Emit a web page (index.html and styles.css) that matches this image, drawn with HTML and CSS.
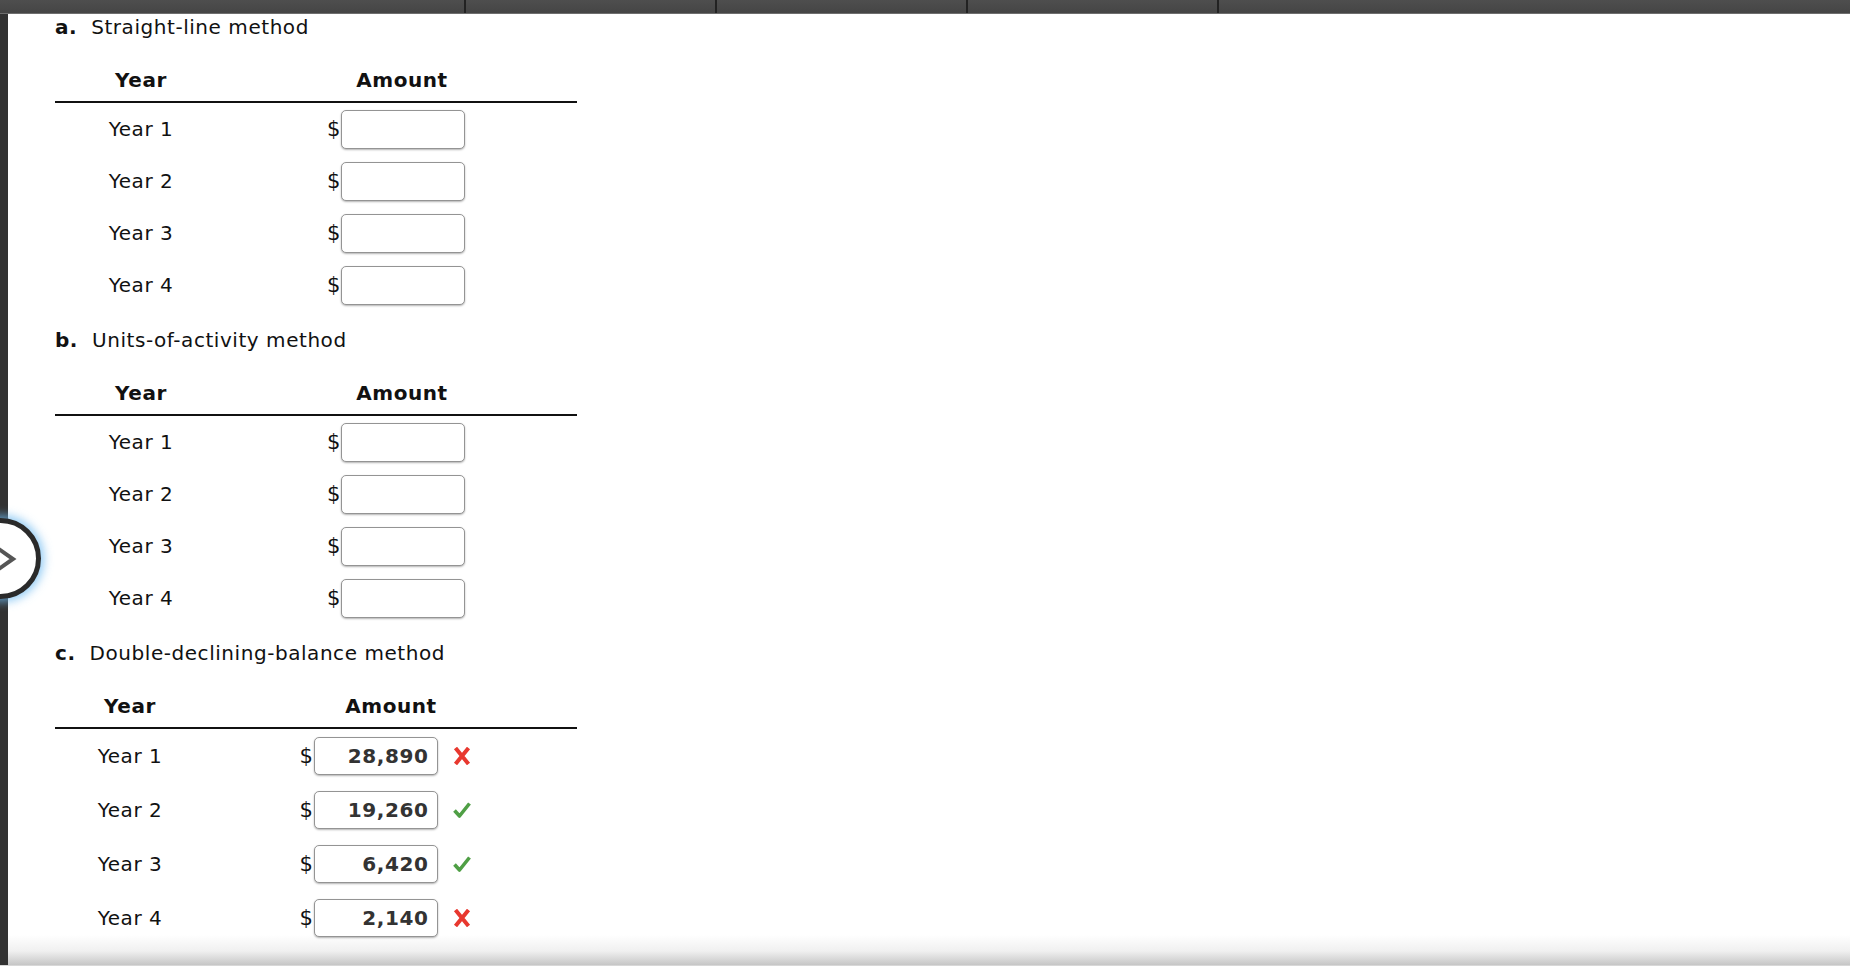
FILE: index.html
```html
<!DOCTYPE html>
<html>
<head>
<meta charset="utf-8">
<title>Depreciation</title>
<link rel="stylesheet" href="styles.css">
</head>
<body>
<div class="topbar">
  <div class="seg seg-first"></div>
  <div class="seg"></div>
  <div class="seg"></div>
  <div class="seg"></div>
  <div class="seg seg-last"></div>
</div>
<div class="frame">
  <div class="strip"></div>
  <div class="content">
    <section class="part">
      <h2 class="heading"><b class="letter">a.</b>Straight-line method</h2>
      <div class="grid ab">
        <div class="th">Year</div><div class="th">Amount</div>
        <div class="yr">Year 1</div><div class="amt"><span class="cur">$</span><input class="box" type="text"></div>
        <div class="yr">Year 2</div><div class="amt"><span class="cur">$</span><input class="box" type="text"></div>
        <div class="yr">Year 3</div><div class="amt"><span class="cur">$</span><input class="box" type="text"></div>
        <div class="yr">Year 4</div><div class="amt"><span class="cur">$</span><input class="box" type="text"></div>
      </div>
    </section>
    <section class="part">
      <h2 class="heading"><b class="letter">b.</b>Units-of-activity method</h2>
      <div class="grid ab">
        <div class="th">Year</div><div class="th">Amount</div>
        <div class="yr">Year 1</div><div class="amt"><span class="cur">$</span><input class="box" type="text"></div>
        <div class="yr">Year 2</div><div class="amt"><span class="cur">$</span><input class="box" type="text"></div>
        <div class="yr">Year 3</div><div class="amt"><span class="cur">$</span><input class="box" type="text"></div>
        <div class="yr">Year 4</div><div class="amt"><span class="cur">$</span><input class="box" type="text"></div>
      </div>
    </section>
    <section class="part">
      <h2 class="heading"><b class="letter">c.</b>Double-declining-balance method</h2>
      <div class="grid cc">
        <div class="th">Year</div><div class="th">Amount</div>
        <div class="yr">Year 1</div><div class="amt"><span class="cur">$</span><input class="box filled" type="text" value="28,890" readonly><svg class="mark" viewBox="0 0 18 18"><path d="M2.5 1 L15.5 17 M15.5 1 L2.5 17" stroke="#e8382f" stroke-width="4" fill="none"/></svg></div>
        <div class="yr">Year 2</div><div class="amt"><span class="cur">$</span><input class="box filled" type="text" value="19,260" readonly><svg class="mark" viewBox="0 0 18 18"><path d="M1.5 9.5 L6.5 15 L16.5 2.5" stroke="#4f9f45" stroke-width="3.6" fill="none" stroke-linejoin="round"/></svg></div>
        <div class="yr">Year 3</div><div class="amt"><span class="cur">$</span><input class="box filled" type="text" value="6,420" readonly><svg class="mark" viewBox="0 0 18 18"><path d="M1.5 9.5 L6.5 15 L16.5 2.5" stroke="#4f9f45" stroke-width="3.6" fill="none" stroke-linejoin="round"/></svg></div>
        <div class="yr">Year 4</div><div class="amt"><span class="cur">$</span><input class="box filled" type="text" value="2,140" readonly><svg class="mark" viewBox="0 0 18 18"><path d="M2.5 1 L15.5 17 M15.5 1 L2.5 17" stroke="#e8382f" stroke-width="4" fill="none"/></svg></div>
      </div>
    </section>
  </div>
</div>
<div class="bottom"></div>
<button class="navbtn" aria-label="Next"><svg viewBox="0 0 20 34" class="chev"><path d="M-6 3 L14 17 L-6 31" stroke="#555" stroke-width="4" fill="none"/></svg></button>
</body>
</html>
```
FILE: styles.css
```css
html, body {
  margin: 0;
  padding: 0;
  background: #fff;
  overflow: hidden;
}
body {
  font-family: "DejaVu Sans", Verdana, sans-serif;
  color: #111;
  width: 1850px;
  height: 972px;
  position: relative;
  letter-spacing: 0.55px;
}
.topbar {
  height: 13px;
  display: flex;
  background: linear-gradient(#4e4e4e, #454545);
  border-bottom: 1px solid #6e6e6e;
}
.seg {
  width: 249px;
  border-right: 2px solid #222;
}
.seg-first { width: 464px; }
.seg-last { flex: 1; border-right: none; }
.frame {
  display: flex;
  height: 951px;
}
.strip {
  width: 8px;
  background: #323232;
}
.content {
  flex: 1;
  padding-left: 47px;
  background: linear-gradient(to bottom, #fff calc(100% - 30px), #f0f0f0 calc(100% - 14px), #c6c6c6 100%);
}
.bottom {
  height: 7px;
  border-top: 1px solid #d8d8d8;
  background: #fff;
}
.part {
  width: 522px;
}
.part + .part .heading { margin-top: 16px; }
.heading {
  margin: 0;
  padding-top: 1px;
  font-size: 20px;
  font-weight: normal;
  line-height: 24px;
}
.letter {
  font-weight: bold;
  margin-right: 14px;
}
.grid {
  display: grid;
  margin-top: 20px;
  grid-template-rows: 44px;
  grid-auto-rows: 52px;
}
.ab { grid-template-columns: 172px 350px; }
.cc { grid-template-columns: 150px 372px; grid-auto-rows: 54px; }
.th {
  font-weight: bold;
  font-size: 20px;
  height: 42px;
  line-height: 42px;
  text-align: center;
  border-bottom: 2px solid #111;
}
.yr {
  font-size: 20px;
  display: flex;
  align-items: center;
  justify-content: center;
}
.amt {
  display: flex;
  align-items: center;
  justify-content: center;
  padding-right: 12px;
  font-size: 20px;
}
.cur {
  width: 14px;
  text-align: left;
  font-size: 21px;
}
.box {
  box-sizing: border-box;
  width: 124px;
  height: 39px;
  border: 1px solid #949494;
  border-radius: 5px;
  box-shadow: 0 1px 2px rgba(0,0,0,0.3);
  background: #fff;
  font-family: "DejaVu Sans", Verdana, sans-serif;
  font-size: 20px;
  letter-spacing: 0.6px;
  padding: 0 8px;
  margin: 0;
  outline: none;
}
.filled {
  height: 38px;
  font-weight: bold;
  text-align: right;
  color: #333;
}
.mark {
  width: 18px;
  height: 18px;
  margin-left: 15px;
}
.navbtn {
  position: absolute;
  left: -40px;
  top: 518px;
  width: 81px;
  height: 81px;
  border-radius: 50%;
  border: 5px solid #2a2a2a;
  background: #fff;
  box-shadow: 0 0 10px 3px rgba(110, 185, 240, 0.75);
  padding: 0;
  display: flex;
  align-items: center;
  justify-content: flex-end;
}
.chev {
  width: 20px;
  height: 34px;
  margin-right: 17px;
}
```
